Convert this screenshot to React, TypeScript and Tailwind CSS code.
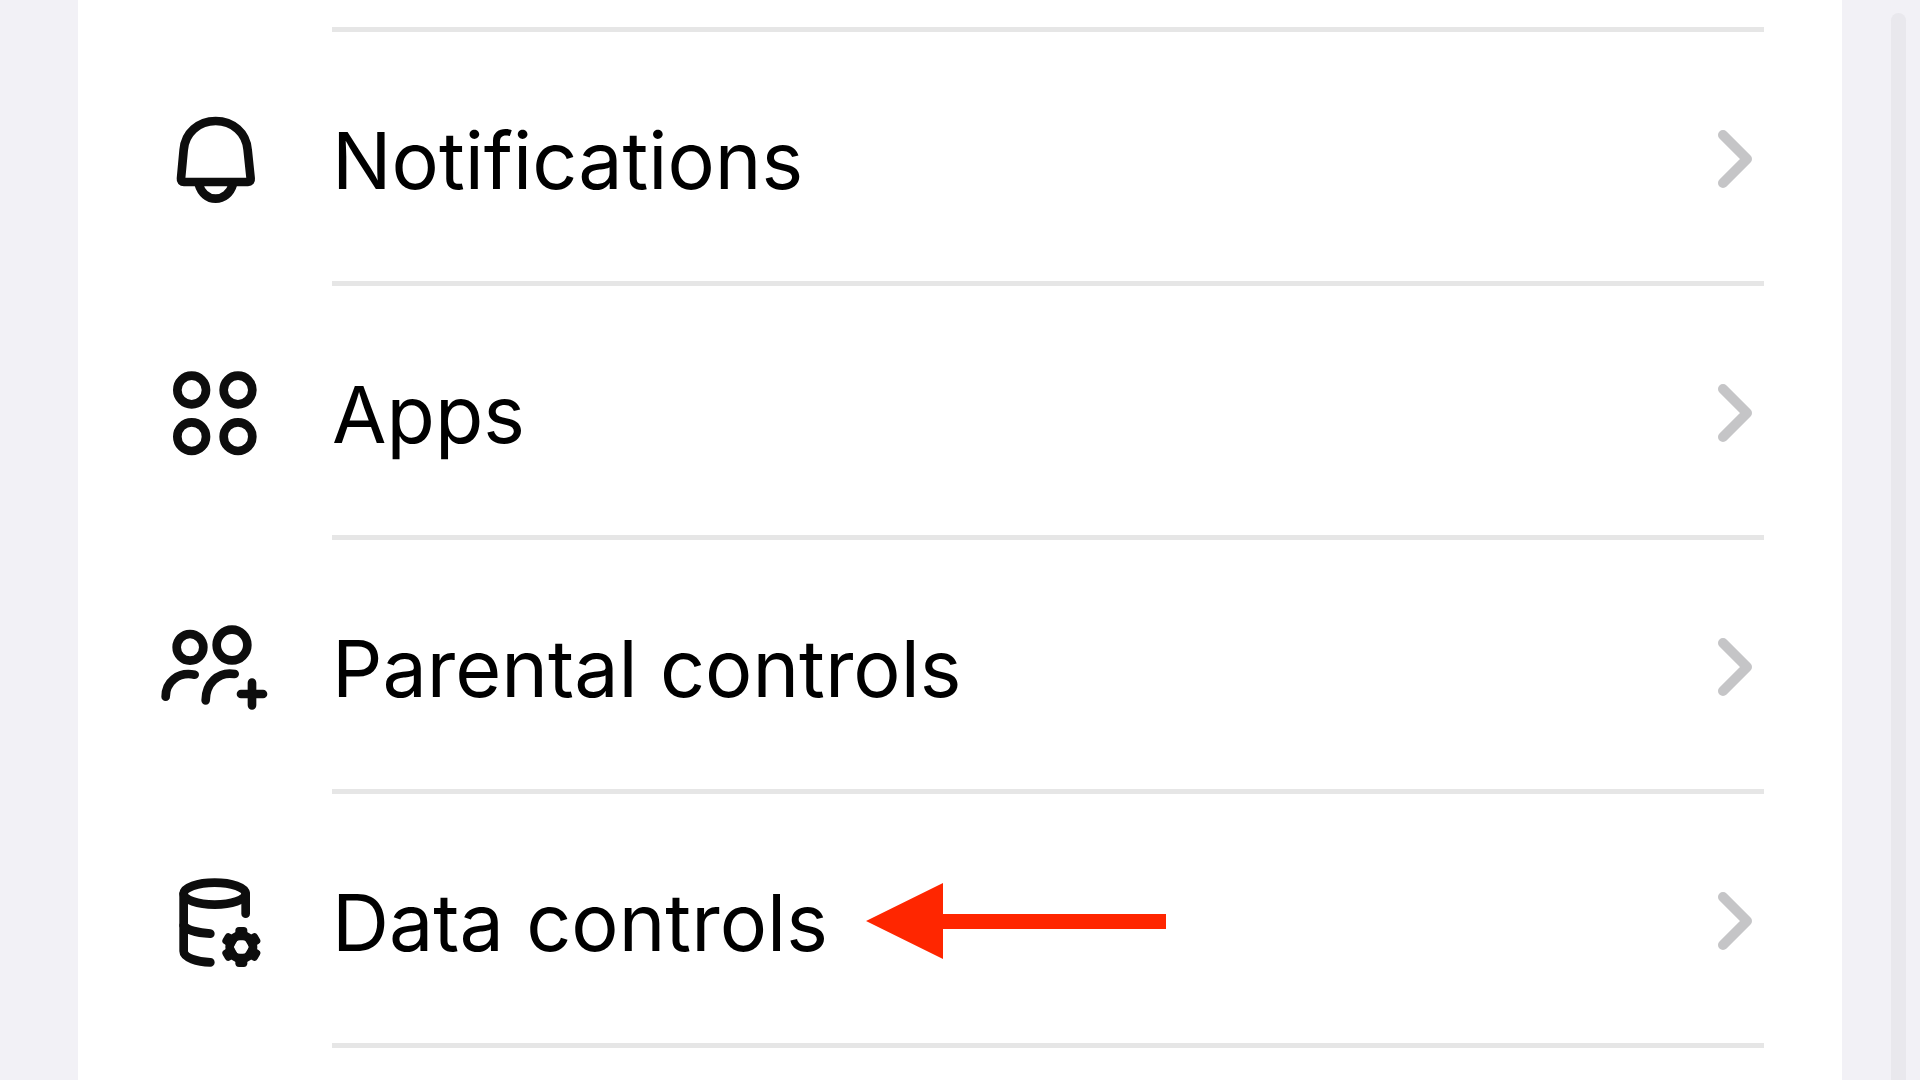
import type { ReactNode } from "react";

function IconFrame({ viewBox, children }: { viewBox: string; children: ReactNode }) {
  return (
    <svg
      viewBox={viewBox}
      className="h-[120px] w-[130px] shrink-0"
      fill="none"
      stroke="#0d0d0d"
      strokeWidth="26"
      strokeLinecap="round"
      strokeLinejoin="round"
      aria-hidden="true"
    >
      {children}
    </svg>
  );
}

function BellIcon() {
  return (
    <IconFrame viewBox="0 0 390 360">
      <path d="M93 236 L101 150 C105 98 146 63 197 63 C248 63 289 98 293 150 L302 236 Q303 246 294 246 H102 Q92 246 93 236Z" />
      <path strokeLinecap="butt" d="M146 252 C154 280 174 296 197 296 C220 296 241 280 249 252" />
    </IconFrame>
  );
}

function AppsIcon() {
  return (
    <IconFrame viewBox="0 -3 390 360">
      <circle cx="125" cy="105" r="43" />
      <circle cx="264" cy="105" r="43" />
      <circle cx="125" cy="245" r="43" />
      <circle cx="264" cy="245" r="43" />
    </IconFrame>
  );
}

function PeopleIcon() {
  return (
    <IconFrame viewBox="0 -6 390 360">
      <circle cx="120" cy="112" r="40" />
      <circle cx="246" cy="105" r="46" />
      <path d="M47 260 C47 217 83 184 134 194" />
      <path d="M167 271 C167 222 204 183 254 192" />
      <path d="M306 218 V286 M273 252 H339" />
    </IconFrame>
  );
}

const teeth = [0, 60, 120, 180, 240, 300];

function DataIcon() {
  return (
    <IconFrame viewBox="0 6 390 360">
      <ellipse cx="194" cy="101" rx="93" ry="33" />
      <path d="M287 101 V161" />
      <path d="M101 101 V274 C101 293 142 306 181 307" />
      <path d="M101 196 C110 210 145 219 181 221" />
      <g fill="#0d0d0d" stroke="none">
        {teeth.map((angle) => (
          <rect key={angle} x="256" y="201" width="36" height="40" rx="11" transform={`rotate(${angle} 274 261)`} />
        ))}
      </g>
      <circle cx="274" cy="261" r="35" />
    </IconFrame>
  );
}

function Chevron() {
  return (
    <svg viewBox="0 0 36 60" className="ml-auto h-[60px] w-9 shrink-0" fill="none" aria-hidden="true">
      <path d="M6 6 L30 30 L6 54" stroke="#c5c5c7" strokeWidth="10" strokeLinecap="round" strokeLinejoin="round" />
    </svg>
  );
}

function Arrow() {
  return (
    <svg viewBox="0 0 300 76" className="ml-[38px] h-[76px] w-[300px] shrink-0" aria-hidden="true">
      <path d="M0 38 L77 0 V31 H300 V46 H77 V76 Z" fill="#ff2600" />
    </svg>
  );
}

type Item = { label: string; icon: ReactNode; marked?: boolean };

const items: Item[] = [
  { label: "Notifications", icon: <BellIcon /> },
  { label: "Apps", icon: <AppsIcon /> },
  { label: "Parental controls", icon: <PeopleIcon /> },
  { label: "Data controls", icon: <DataIcon />, marked: true },
];

function Row({ label, icon, marked }: Item) {
  return (
    <li>
      <button type="button" className="flex h-[254px] w-full items-center gap-[52px] pt-[2px] pr-[78px] pl-[72px] text-left">
        {icon}
        <span className="flex flex-1 items-center self-stretch border-b-5 border-[#e6e6e6] pt-[3px] pr-[11px]">
          <span className="pt-[2px] whitespace-nowrap">{label}</span>
          {marked && <Arrow />}
          <Chevron />
        </span>
      </button>
    </li>
  );
}

export default function App() {
  return (
    <div className="flex h-screen overflow-hidden bg-[#f2f1f6] font-['Inter',sans-serif] text-[79px] leading-[96px] text-black">
      <main className="ml-[78px] flex-1 bg-white">
        <div className="mr-[78px] ml-[254px] h-8 border-b-5 border-[#e6e6e6]" />
        <ul>
          {items.map((item) => (
            <Row key={item.label} {...item} />
          ))}
        </ul>
      </main>
      <div className="flex w-[78px] justify-end pt-[13px] pr-[14px]">
        <div className="w-[15px] rounded-t-full bg-[#e9e8ed]" />
      </div>
    </div>
  );
}
